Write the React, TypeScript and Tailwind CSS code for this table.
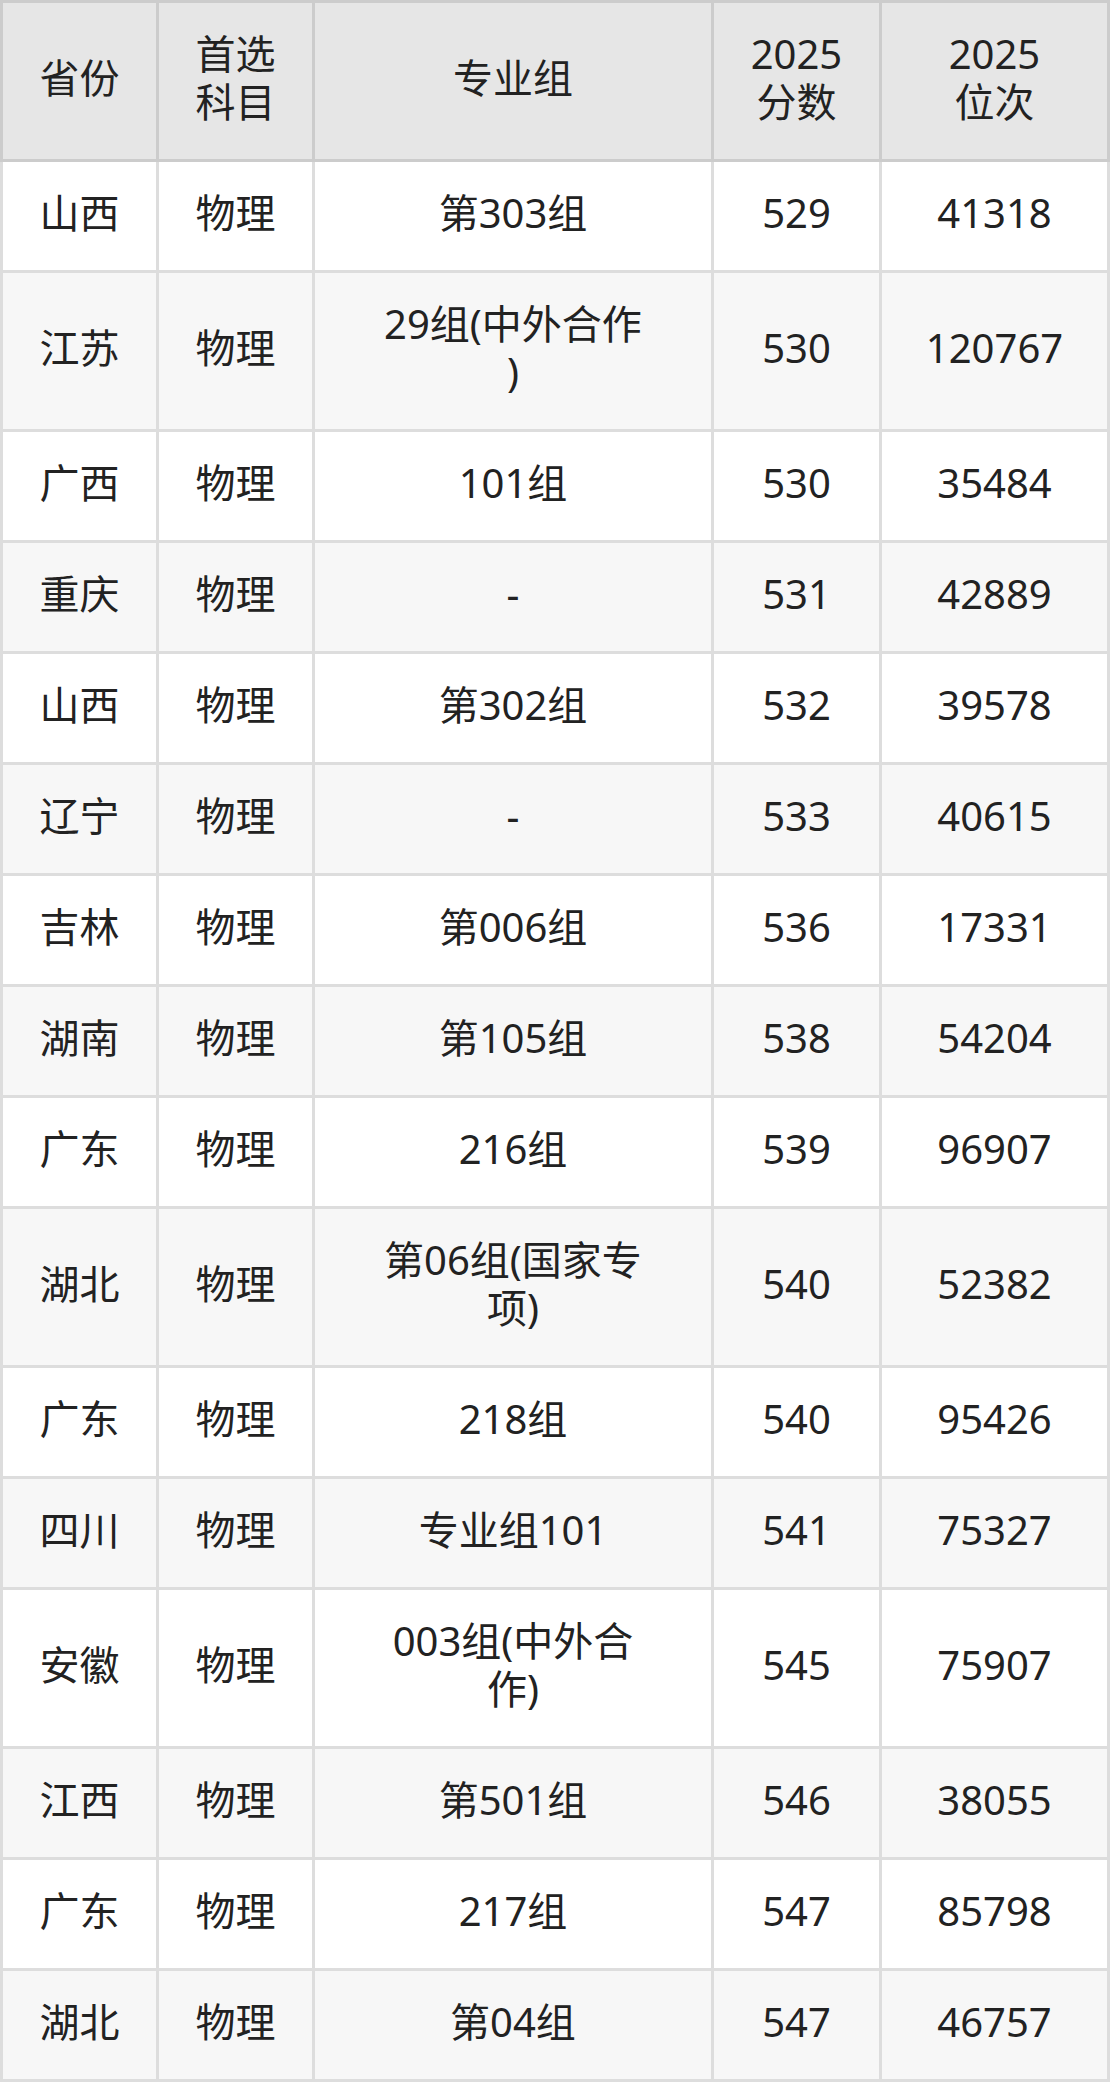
type Row = {
  province: string;
  subject: string;
  group: string;
  score: string;
  rank: string;
};

const ROWS: Row[] = [
  { province: '山西', subject: '物理', group: '第303组', score: '529', rank: '41318' },
  { province: '江苏', subject: '物理', group: '29组(中外合作)', score: '530', rank: '120767' },
  { province: '广西', subject: '物理', group: '101组', score: '530', rank: '35484' },
  { province: '重庆', subject: '物理', group: '-', score: '531', rank: '42889' },
  { province: '山西', subject: '物理', group: '第302组', score: '532', rank: '39578' },
  { province: '辽宁', subject: '物理', group: '-', score: '533', rank: '40615' },
  { province: '吉林', subject: '物理', group: '第006组', score: '536', rank: '17331' },
  { province: '湖南', subject: '物理', group: '第105组', score: '538', rank: '54204' },
  { province: '广东', subject: '物理', group: '216组', score: '539', rank: '96907' },
  { province: '湖北', subject: '物理', group: '第06组(国家专项)', score: '540', rank: '52382' },
  { province: '广东', subject: '物理', group: '218组', score: '540', rank: '95426' },
  { province: '四川', subject: '物理', group: '专业组101', score: '541', rank: '75327' },
  { province: '安徽', subject: '物理', group: '003组(中外合作)', score: '545', rank: '75907' },
  { province: '江西', subject: '物理', group: '第501组', score: '546', rank: '38055' },
  { province: '广东', subject: '物理', group: '217组', score: '547', rank: '85798' },
  { province: '湖北', subject: '物理', group: '第04组', score: '547', rank: '46757' },
];

const th = 'border-[3px] border-[#cccccc] bg-[#e6e6e6] pt-[27px] pb-[33px] px-2 font-normal text-center align-middle';
const td = 'border-[3px] border-[#dddddd] pt-[27px] pb-[33px] px-2 text-center align-middle';

export default function App() {
  return (
    <div className="w-[1110px] bg-white font-['Noto_Sans','Noto_Sans_CJK_SC',sans-serif] text-[40px] leading-[48px] text-[#222222]">
      <table className="w-[1110px] table-fixed border-collapse">
        <colgroup>
          <col className="w-[156px]" />
          <col className="w-[156px]" />
          <col className="w-[399px]" />
          <col className="w-[168px]" />
          <col className="w-[228px]" />
        </colgroup>
        <thead>
          <tr>
            <th className={th}>省份</th>
            <th className={th}>
              首选
              <br />
              科目
            </th>
            <th className={th}>专业组</th>
            <th className={th}>
              2025
              <br />
              分数
            </th>
            <th className={th}>
              2025
              <br />
              位次
            </th>
          </tr>
        </thead>
        <tbody>
          {ROWS.map((row, i) => (
            <tr key={i} className={i % 2 === 0 ? 'bg-white' : 'bg-[#f7f7f7]'}>
              <td className={td}>{row.province}</td>
              <td className={td}>{row.subject}</td>
              <td className={`${td} !px-[66px] [line-break:anywhere]`}>{row.group}</td>
              <td className={td}>{row.score}</td>
              <td className={td}>{row.rank}</td>
            </tr>
          ))}
        </tbody>
      </table>
    </div>
  );
}
